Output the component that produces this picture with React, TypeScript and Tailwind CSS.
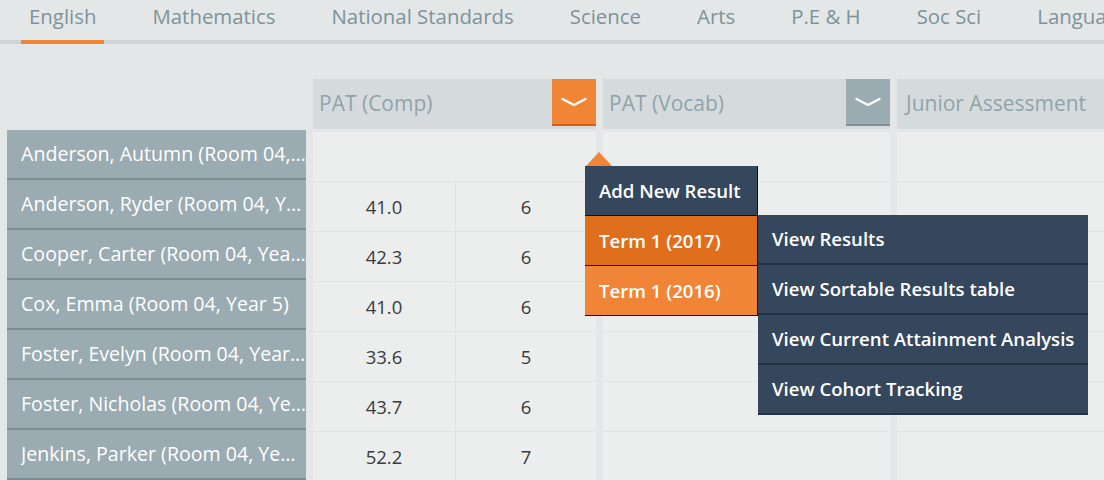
import React from "react";

const tabs = [
    "English",
    "Mathematics",
    "National Standards",
    "Science",
    "Arts",
    "P.E & H",
    "Soc Sci",
    "Languages",
];

const students = [
    { name: "Anderson, Autumn (Room 04, Year 5)", score: "", stanine: "" },
    { name: "Anderson, Ryder (Room 04, Year 5)", score: "41.0", stanine: "6" },
    { name: "Cooper, Carter (Room 04, Year 5)", score: "42.3", stanine: "6" },
    { name: "Cox, Emma (Room 04, Year 5)", score: "41.0", stanine: "6" },
    { name: "Foster, Evelyn (Room 04, Year 5)", score: "33.6", stanine: "5" },
    { name: "Foster, Nicholas (Room 04, Year 5)", score: "43.7", stanine: "6" },
    { name: "Jenkins, Parker (Room 04, Year 5)", score: "52.2", stanine: "7" },
];

const subMenu = [
    "View Results",
    "View Sortable Results table",
    "View Current Attainment Analysis",
    "View Cohort Tracking",
];

function Chevron() {
    return (
        <svg width="26" height="10" viewBox="0 0 26 10" fill="none">
            <polyline
                points="1.5,2 13,8 24.5,2"
                stroke="white"
                strokeWidth="2.4"
                strokeLinecap="round"
                strokeLinejoin="round"
            />
        </svg>
    );
}

function ColumnHeader({ title, active }: { title: string; active?: boolean }) {
    return (
        <div className="h-[50px] bg-[#d5dbdd] flex items-start justify-between">
            <span className="pl-[6px] leading-[49px] text-[21px] text-[#91a3a9] whitespace-nowrap">
                {title}
            </span>
            <button
                className={`w-[44px] h-[47px] shrink-0 flex items-center justify-center border-b-[2px] ${
                    active
                        ? "bg-[#f18536] border-[#d65e10]"
                        : "bg-[#9aabb1] border-[#7f9197]"
                }`}
            >
                <Chevron />
            </button>
        </div>
    );
}

export default function App() {
    return (
        <div className="relative w-[1104px] h-[480px] overflow-hidden bg-[#e3e7e8] font-['Open_Sans',sans-serif]">
            {/* タブ */}
            <nav className="flex h-[44px] gap-[40px] pl-[21px] border-b-[4px] border-[#ccd4d7] whitespace-nowrap">
                {tabs.map((tab, i) => (
                    <div
                        key={tab}
                        className={`h-[44px] px-[8px] pt-[1px] text-[20.4px] text-[#7e9399] border-b-[4px] ${
                            i === 0 ? "border-[#f08535]" : "border-transparent"
                        }`}
                    >
                        {tab}
                    </div>
                ))}
            </nav>

            <div className="flex gap-[7px] pt-[35px] pl-[7px]">
                {/* 生徒名 */}
                <div className="w-[299px] shrink-0 mt-[51px] bg-[#9aabb1]">
                    {students.map((s) => (
                        <div
                            key={s.name}
                            className="h-[50px] border-b-[2px] border-[#7b8d94] pl-[14px] flex items-center text-[19.6px] text-white overflow-hidden"
                        >
                            <span className="block overflow-hidden text-ellipsis whitespace-nowrap">
                                {s.name}
                            </span>
                        </div>
                    ))}
                </div>

                {/* PAT (Comp) */}
                <div className="w-[283px] shrink-0">
                    <ColumnHeader title="PAT (Comp)" active />
                    <div className="mt-[3px] bg-[#eceeed]">
                        {students.map((s, i) =>
                            i === 0 ? (
                                <div key={s.name} className="h-[50px] border-b border-[#dfe3e3]" />
                            ) : (
                                <div
                                    key={s.name}
                                    className="h-[50px] border-b border-[#dfe3e3] flex text-[18.5px] text-[#3b3b3b]"
                                >
                                    <div className="w-[143px] border-r border-[#dfe3e3] flex items-center justify-center">
                                        {s.score}
                                    </div>
                                    <div className="flex-1 flex items-center justify-center">
                                        {s.stanine}
                                    </div>
                                </div>
                            )
                        )}
                    </div>
                </div>

                {/* PAT (Vocab) */}
                <div className="w-[287px] shrink-0">
                    <ColumnHeader title="PAT (Vocab)" />
                    <div className="mt-[3px] bg-[#eceeed]">
                        {students.map((s) => (
                            <div key={s.name} className="h-[50px] border-b border-[#dfe3e3]" />
                        ))}
                    </div>
                </div>

                {/* Junior Assessment */}
                <div className="w-[300px] shrink-0">
                    <div className="h-[50px] bg-[#d5dbdd]">
                        <span className="pl-[9px] leading-[49px] text-[21px] text-[#91a3a9] whitespace-nowrap">
                            Junior Assessment
                        </span>
                    </div>
                    <div className="mt-[3px] bg-[#eceeed]">
                        {students.map((s) => (
                            <div key={s.name} className="h-[50px] border-b border-[#dfe3e3]" />
                        ))}
                    </div>
                </div>
            </div>

            {/* ドロップダウンメニュー */}
            <div className="absolute left-[586px] top-[152px] w-0 h-0 border-l-[13px] border-r-[13px] border-b-[14px] border-l-transparent border-r-transparent border-b-[#f08537]" />
            <div className="absolute left-[585px] top-[166px] w-[173px] border-r border-[#111] text-[18.6px] font-semibold text-white">
                <div className="h-[50px] bg-[#35475c] border-b border-[#111] px-[14px] flex items-center">
                    Add New Result
                </div>
                <div className="h-[50px] bg-[#df6f1d] border-b border-[#111] px-[14px] flex items-center">
                    Term 1 (2017)
                </div>
                <div className="h-[50px] bg-[#f08537] border-b border-[#111] px-[14px] flex items-center">
                    Term 1 (2016)
                </div>
            </div>
            <div className="absolute left-[758px] top-[215px] w-[330px] bg-[#35475c] text-[18.6px] font-semibold text-white">
                {subMenu.map((item) => (
                    <div
                        key={item}
                        className="h-[50px] border-b-[2px] border-[#243243] px-[14px] flex items-center whitespace-nowrap"
                    >
                        {item}
                    </div>
                ))}
            </div>
        </div>
    );
}
